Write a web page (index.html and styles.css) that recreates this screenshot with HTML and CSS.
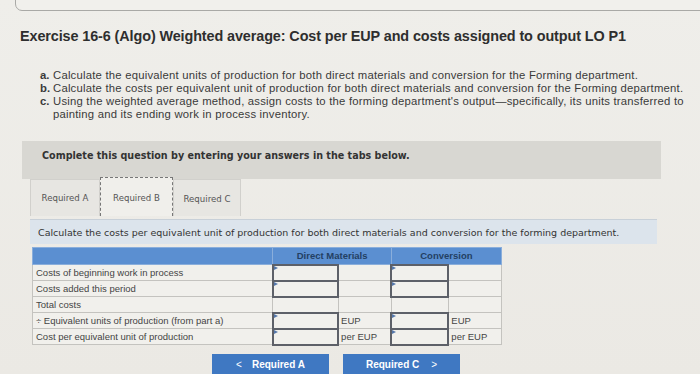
FILE: index.html
```html
<!DOCTYPE html>
<html lang="en">

<head>
    <meta charset="UTF-8">
    <title>Exercise 16-6</title>
    <link rel="stylesheet" href="styles.css">
</head>

<body>
    <div class="top-box"></div>

    <h1 class="title">Exercise 16-6 (Algo) Weighted average: Cost per EUP and costs assigned to output LO P1</h1>

    <ol class="parts">
        <li><b>a.</b><span>Calculate the equivalent units of production for both direct materials and conversion for the Forming department.</span></li>
        <li><b>b.</b><span>Calculate the costs per equivalent unit of production for both direct materials and conversion for the Forming department.</span></li>
        <li><b>c.</b><span>Using the weighted average method, assign costs to the forming department's output—specifically, its units transferred to painting and its ending work in process inventory.</span></li>
    </ol>

    <div class="notice">Complete this question by entering your answers in the tabs below.</div>

    <div class="tabs">
        <div class="tab">Required A</div>
        <div class="tab active">Required B</div>
        <div class="tab">Required C</div>
    </div>

    <div class="prompt">Calculate the costs per equivalent unit of production for both direct materials and conversion for the forming department.</div>

    <table class="grid">
        <colgroup>
            <col class="c-label">
            <col class="c-input">
            <col class="c-unit">
            <col class="c-input2">
            <col class="c-unit">
        </colgroup>
        <thead>
            <tr>
                <th></th>
                <th colspan="2">Direct Materials</th>
                <th colspan="2">Conversion</th>
            </tr>
        </thead>
        <tbody>
            <tr>
                <td class="label">Costs of beginning work in process</td>
                <td class="input"></td><td class="unit"></td>
                <td class="input"></td><td class="unit"></td>
            </tr>
            <tr>
                <td class="label">Costs added this period</td>
                <td class="input"></td><td class="unit"></td>
                <td class="input"></td><td class="unit"></td>
            </tr>
            <tr>
                <td class="label">Total costs</td>
                <td class="plain"></td><td class="unit"></td>
                <td class="plain"></td><td class="unit"></td>
            </tr>
            <tr>
                <td class="label">÷ Equivalent units of production (from part a)</td>
                <td class="input"></td><td class="unit">EUP</td>
                <td class="input"></td><td class="unit">EUP</td>
            </tr>
            <tr>
                <td class="label">Cost per equivalent unit of production</td>
                <td class="input"></td><td class="unit">per EUP</td>
                <td class="input"></td><td class="unit">per EUP</td>
            </tr>
        </tbody>
    </table>

    <div class="nav">
        <button class="nav-btn"><span class="chev">&lt;</span>Required A</button>
        <button class="nav-btn">Required C<span class="chev right">&gt;</span></button>
    </div>
</body>

</html>
```

FILE: styles.css
```css
* {
    margin: 0;
    padding: 0;
    box-sizing: border-box;
}

body {
    font-family: 'Liberation Sans', Arial, sans-serif;
    background: linear-gradient(180deg, #efeeea 0%, #ebe9e4 100%);
    color: #333;
    width: 700px;
    height: 374px;
    overflow: hidden;
}

.top-box {
    margin: -20px -20px 0 15px;
    height: 31px;
    border: 1px solid #a9a9a6;
    border-radius: 7px;
    background: #f1f0ec;
}

.title {
    font-size: 14.4px;
    font-weight: bold;
    color: #2e2e2e;
    margin: 17px 0 0 20px;
    letter-spacing: -0.1px;
}

.parts {
    list-style: none;
    margin: 25px 0 0 40px;
    font-size: 11.3px;
    line-height: 13px;
    letter-spacing: 0.22px;
    color: #3a3a3a;
}

.parts li {
    display: flex;
}

.parts b {
    width: 13px;
    flex-shrink: 0;
    letter-spacing: 0;
}

.notice {
    margin: 20px 0 0 22px;
    width: 639px;
    height: 38px;
    background: #d8d7d2;
    font-family: 'DejaVu Sans', Verdana, sans-serif;
    font-size: 9.6px;
    font-weight: bold;
    padding: 9px 0 0 20px;
    color: #333;
}

.tabs {
    display: flex;
    margin: 0 0 0 30px;
    height: 37px;
    align-items: flex-end;
}

.tab {
    font-family: 'DejaVu Sans', Verdana, sans-serif;
    font-size: 8.6px;
    color: #555;
    height: 37px;
    padding: 13px 0 0 0;
    text-align: center;
    background: #e7e6e2;
    border: 1px solid #d1d0cc;
    border-bottom: none;
}

.tab:nth-child(1) {
    width: 70px;
}

.tab.active {
    width: 73px;
    height: 39px;
    margin-top: -2px;
    padding-top: 15px;
    background: #f0efeb;
    border: 1px dashed #777;
    border-bottom: none;
}

.tab:nth-child(3) {
    width: 68px;
    padding-top: 14px;
}

.prompt {
    margin: 3px 0 0 30px;
    width: 627px;
    height: 25px;
    background: #dce4ec;
    border-top: 1px solid #c8d0d8;
    font-family: 'DejaVu Sans', Verdana, sans-serif;
    font-size: 9.5px;
    padding: 7px 0 0 8px;
    color: #333;
}

.grid {
    margin: 3px 0 0 32px;
    width: 470px;
    table-layout: fixed;
    border-collapse: collapse;
    font-size: 9.5px;
    color: #444;
}

.c-label {
    width: 240px;
}

.c-input {
    width: 65px;
}

.c-unit {
    width: 53px;
}

.c-input2 {
    width: 57px;
}

.grid th {
    background: #5b8fd1;
    color: #233f63;
    font-size: 9.5px;
    font-weight: bold;
    height: 17px;
    border: 1px solid #8aaedb;
}

.grid td {
    height: 16px;
    border: 1px solid #c4c3bf;
    background: #f1f0ec;
    padding: 0 2px;
    white-space: nowrap;
}

.grid td.label {
    padding-left: 3px;
}

.grid td.input {
    border: 2px solid #5d6068;
    position: relative;
}

.grid td.input::before {
    content: '';
    position: absolute;
    left: 0;
    top: 0;
    border-left: 4px solid #5577aa;
    border-top: 2px solid transparent;
    border-bottom: 2px solid transparent;
}

.nav {
    display: flex;
    gap: 14px;
    margin: 8px 0 0 212px;
}

.nav-btn {
    width: 117px;
    height: 26px;
    padding-bottom: 4px;
    background: #3f78c2;
    color: #fff;
    border: none;
    font-family: 'Liberation Sans', Arial, sans-serif;
    font-size: 10px;
    font-weight: bold;
}

.chev {
    font-weight: normal;
    margin-right: 10px;
}

.chev.right {
    margin: 0 0 0 12px;
}
```
